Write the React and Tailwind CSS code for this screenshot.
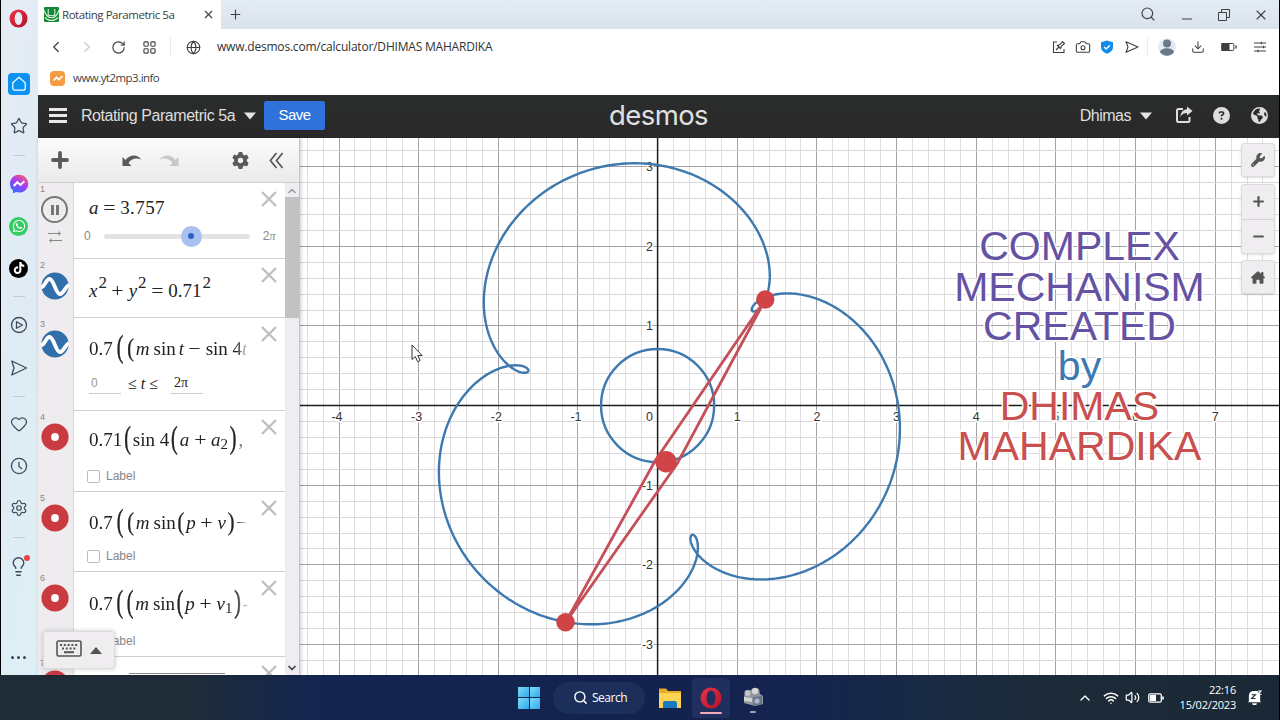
import { Search, Minus, X, Plus, ChevronLeft, ChevronRight, ChevronUp, RotateCw, Camera, Download, Star, Heart, Settings, Lightbulb, Globe, Wifi, Volume2 } from "lucide-react";
import { FaGear, FaWrench, FaCircleQuestion, FaEarthAmericas, FaWhatsapp, FaTiktok, FaHouseChimney } from "react-icons/fa6";

const OX = 657.6;
const OY = 405.6;
const UNIT = 79.65;
const px = (x) => OX + x * UNIT;
const py = (y) => OY - y * UNIT;

const range = (from, to) => Array.from({ length: to - from + 1 }, (_, i) => from + i);

// z(t) = 2.38 e^(it) - 0.7 e^(i(4t - 135deg))
function curvePath() {
  const phase = (-135 * Math.PI) / 180;
  const points = [];
  for (let i = 0; i <= 720; i++) {
    const t = (i * Math.PI) / 360;
    const x = 2.38 * Math.cos(t) - 0.7 * Math.cos(4 * t + phase);
    const y = 2.38 * Math.sin(t) - 0.7 * Math.sin(4 * t + phase);
    points.push(`${px(x).toFixed(2)} ${py(y).toFixed(2)}`);
  }
  return `M${points.join("L")}Z`;
}

const banner = [
  { text: "COMPLEX", y: 260, color: "#6552a3" },
  { text: "MECHANISM", y: 300.5, color: "#6552a3" },
  { text: "CREATED", y: 340, color: "#6552a3" },
  { text: "by", y: 380, color: "#3d7ab2" },
  { text: "DHIMAS", y: 419.5, color: "#c9504f" },
  { text: "MAHARDIKA", y: 460, color: "#c9504f" },
];

function OperaLogo({ className }) {
  return (
    <svg viewBox="0 0 20 20" className={className}>
      <defs>
        <linearGradient id="opera" x1="0" y1="0" x2="1" y2="1">
          <stop offset="0" stopColor="#ef3346" />
          <stop offset="1" stopColor="#b1122a" />
        </linearGradient>
      </defs>
      <path fillRule="evenodd" fill="url(#opera)" d="M10 0.5a9.5 9.5 0 1 0 0 19a9.5 9.5 0 0 0 0-19zM10 3.2c2.4 0 4 3 4 6.8s-1.6 6.8-4 6.8s-4-3-4-6.8s1.6-6.8 4-6.8z" />
    </svg>
  );
}

function Sidebar() {
  const icon = "h-[18px] w-[18px] text-[#3f4b57]";
  const dash = <div className="h-px w-3 bg-[#c3ccd4]" />;
  return (
    <div className="flex w-[38px] shrink-0 flex-col items-center border-l border-black bg-[linear-gradient(100deg,#e6ecf4,#dfebf4_50%,#def0f5)] pr-[2px]">
      <div className="flex h-[63px] w-full justify-center pt-[9px]"><OperaLogo className="h-[19px] w-[19px]" /></div>
      <div className="flex h-[42px] items-center">
        <div className="flex h-[22px] w-[22px] items-center justify-center rounded-sm bg-[#0b93f3]">
          <svg viewBox="0 0 16 16" className="h-4 w-4" fill="none" stroke="#fff" strokeWidth="1.2"><path d="M1.8 6.8L8 1.2l6.2 5.6v5.4a2 2 0 0 1-2 2H3.8a2 2 0 0 1-2-2z" /></svg>
        </div>
      </div>
      <div className="flex h-[42px] items-center"><Star className={icon} strokeWidth={1.7} /></div>
      <div className="flex h-4 items-center">{dash}</div>
      <div className="flex h-[42px] items-center">
        <svg viewBox="0 0 20 20" className="h-5 w-5">
          <defs>
            <linearGradient id="msgr" x1="0.2" y1="1" x2="0.8" y2="0">
              <stop offset="0" stopColor="#2b74ff" />
              <stop offset="0.55" stopColor="#a63cf5" />
              <stop offset="1" stopColor="#ff6070" />
            </linearGradient>
          </defs>
          <path fill="url(#msgr)" d="M10 0.8a9 9 0 0 1 9.3 8.8a9 9 0 0 1-11.9 8.5L4 19.3V16.5A9 9 0 0 1 10 .8z" />
          <path fill="none" stroke="#fff" strokeWidth="2" d="M4.7 12l3.6-3.8l3.2 2.7l3.8-3.6" />
        </svg>
      </div>
      <div className="flex h-[42px] items-center">
        <div className="flex h-[19px] w-[19px] items-center justify-center rounded-full bg-[#35cb65]"><FaWhatsapp className="h-3.5 w-3.5 text-white" /></div>
      </div>
      <div className="flex h-[42px] items-center">
        <div className="flex h-[19px] w-[19px] items-center justify-center rounded-full bg-black"><FaTiktok className="h-3 w-3 text-white" /></div>
      </div>
      <div className="flex h-[15px] items-center">{dash}</div>
      <div className="flex h-[42px] items-center">
        <svg viewBox="0 0 18 18" className={icon} fill="none" stroke="currentColor" strokeWidth="1.3"><circle cx="9" cy="9" r="7.5" /><path d="M6.5 5.7l6 3.3l-6 3.3z" strokeLinejoin="round" /></svg>
      </div>
      <div className="flex h-[43px] items-center">
        <svg viewBox="0 0 18 18" className={icon} fill="none" stroke="currentColor" strokeWidth="1.3" strokeLinejoin="round"><path d="M1.8 2L16.5 9L1.8 16L4 9z" /></svg>
      </div>
      <div className="flex h-[14px] items-center">{dash}</div>
      <div className="flex h-[42px] items-center"><Heart className={icon} strokeWidth={1.6} /></div>
      <div className="flex h-[42px] items-center">
        <svg viewBox="0 0 18 18" className={icon} fill="none" stroke="currentColor" strokeWidth="1.3"><circle cx="9" cy="9" r="7.6" /><path d="M9 5v4.5l3 2.5" /></svg>
      </div>
      <div className="flex h-[42px] items-center"><Settings className={icon} strokeWidth={1.6} /></div>
      <div className="flex h-4 items-center">{dash}</div>
      <div className="relative flex h-[42px] items-center">
        <Lightbulb className="h-[21px] w-[21px] text-[#3f4b57]" strokeWidth={1.6} />
        <span className="absolute top-[10px] -right-[1px] h-[6px] w-[6px] rounded-full bg-[#f04444]" />
      </div>
      <div className="mt-auto flex h-9 items-center gap-[3px]">
        {[0, 1, 2].map((i) => <span key={i} className="h-[3px] w-[3px] rounded-full bg-[#3c4650]" />)}
      </div>
    </div>
  );
}

function BrowserBars() {
  return (
    <div className="h-[95px] bg-white font-['Open_Sans',sans-serif] text-[#3d4043]">
      <div className="flex h-[29px] bg-[linear-gradient(180deg,#e3ebf3,#dae2ec)]">
        <div className="flex w-[183px] items-center bg-white pl-[6px]">
          <svg viewBox="0 0 16 16" className="h-[15px] w-[15px] shrink-0">
            <rect width="16" height="16" rx="1" fill="#128a31" />
            <path d="M0 3.5c2 5.5 4 8 8 8s6-2.5 8-8M4.5 2v6.5M11.5 2v6.5M4.5 8.5c1.5 1 5.5 1 7 0M1 11c2 2.5 4 3.5 7 3.5s5-1 7-3.5" fill="none" stroke="#dff5e2" strokeWidth="1.1" />
          </svg>
          <span className="ml-[3px] w-[140px] text-[11.5px] tracking-[-0.46px] whitespace-nowrap">Rotating Parametric 5a</span>
          <X className="h-[13px] w-[13px] shrink-0" strokeWidth={2} />
        </div>
        <div className="flex w-[29px] items-center justify-center"><Plus className="h-[15px] w-[15px]" strokeWidth={1.7} /></div>
        <div className="ml-auto flex w-[150px] items-center justify-between pr-[10px] pl-[11px]">
          <Search className="mb-[2px] h-4 w-4" strokeWidth={1.7} />
          <Minus className="mt-[9px] h-4 w-4" strokeWidth={1.7} />
          <svg viewBox="0 0 12 12" className="h-3 w-3" fill="none" stroke="currentColor"><path d="M.5 3.5h8v8h-8zM3.5 3.5v-3h8v8h-3" /></svg>
          <X className="h-4 w-4" strokeWidth={1.7} />
        </div>
      </div>
      <div className="flex h-9 items-center pr-[13px] pl-[9px]">
        <ChevronLeft className="h-[18px] w-[18px]" strokeWidth={1.7} />
        <ChevronRight className="ml-[13px] h-[18px] w-[18px] text-[#c8cacc]" strokeWidth={1.7} />
        <RotateCw className="ml-[15px] h-[15px] w-[15px]" strokeWidth={1.8} />
        <svg viewBox="0 0 14 14" className="ml-[17px] h-[13px] w-[13px]" fill="none" stroke="currentColor" strokeWidth="1.2">
          <rect x="1" y="1" width="4.6" height="4.6" rx="1" /><rect x="8.4" y="1" width="4.6" height="4.6" rx="1" />
          <rect x="1" y="8.4" width="4.6" height="4.6" rx="1" /><rect x="8.4" y="8.4" width="4.6" height="4.6" rx="1" />
        </svg>
        <div className="ml-[14px] h-5 w-px bg-[#ececec]" />
        <Globe className="ml-[15px] h-[15px] w-[15px]" strokeWidth={1.8} />
        <span className="ml-[16px] text-[12px] tracking-[-0.2px] whitespace-nowrap text-[#2f3235]">www.desmos.com/calculator/DHIMAS MAHARDIKA</span>
        <div className="ml-auto flex items-center">
          <svg viewBox="0 0 14 14" className="h-[14px] w-[14px]" fill="none" stroke="currentColor" strokeWidth="1.1"><path d="M5 2H1.5v10.5h10.5V9M4 10l3-3M5.5 5.5l3 3l1-2.5l3-2.5l-2-2l-2.5 3z" /></svg>
          <Camera className="ml-[9px] h-4 w-4" strokeWidth={1.6} />
          <svg viewBox="0 0 14 14" className="ml-[9px] h-[14px] w-[14px]"><path d="M7 .5l6 1.8v4.7c0 3.5-3 5.7-6 6.7c-3-1-6-3.2-6-6.7V2.3z" fill="#108ce8" /><path d="M4.2 7l2 2l3.7-3.7" stroke="#fff" strokeWidth="1.5" fill="none" /></svg>
          <svg viewBox="0 0 14 14" className="ml-[11px] h-[14px] w-[14px]" fill="none" stroke="currentColor" strokeWidth="1.1" strokeLinejoin="round"><path d="M1 1.8L13 7L1 12.2L3 7z" /></svg>
          <div className="ml-[8px] h-5 w-px bg-[#ececec]" />
          <svg viewBox="0 0 18 18" className="ml-[10px] h-[18px] w-[18px]"><circle cx="9" cy="9" r="8.8" fill="#e2ebf1" /><circle cx="9" cy="5.5" r="4" fill="#697987" /><path d="M2 14c1-5 13-5 14 0c-3 5-11 5-14 0z" fill="#697987" /></svg>
          <Download className="ml-[15px] h-[14px] w-[14px]" strokeWidth={1.8} />
          <svg viewBox="0 0 16 10" className="ml-[16px] h-[10px] w-4" fill="none" stroke="currentColor"><rect x=".8" y="1.5" width="12" height="7" rx="1" /><rect x="1" y="1.5" width="7" height="7" fill="currentColor" /><path d="M15 3.5v3" strokeWidth="1.4" /></svg>
          <svg viewBox="0 0 12 12" className="ml-[17px] h-3 w-3" fill="none" stroke="currentColor" strokeWidth="1.1"><path d="M0 2h12M0 6h12M0 10h12M7.5 .7v2.6M9.5 4.7v2.6M4 8.7v2.6" /></svg>
        </div>
      </div>
      <div className="flex h-[26px] items-center pl-[12px]">
        <div className="flex h-[15px] w-[15px] items-center justify-center rounded-sm bg-[#f59b42]">
          <svg viewBox="0 0 12 12" className="h-3 w-3" fill="none" stroke="#fff" strokeWidth="1.7"><path d="M1.5 8.5l3-3l2.5 2L10.5 4" /></svg>
        </div>
        <span className="ml-[8px] text-[11.5px] tracking-[-0.53px]">www.yt2mp3.info</span>
      </div>
    </div>
  );
}

function Caret() {
  return <svg viewBox="0 0 12 8" className="h-2 w-3 shrink-0"><path d="M0 .5h12L6 7.5z" fill="#e4e4e4" /></svg>;
}

function Header() {
  return (
    <div className="flex h-[43px] items-center justify-between bg-[#29292a] bg-[linear-gradient(180deg,#2a2d2d,#2a2829)] pb-[2px] font-['Liberation_Sans',Arial,sans-serif] text-[#dedede]">
      <div className="flex w-[490px] items-center pl-[11px]">
        <div className="flex w-[18px] flex-col gap-[3px]">
          {[0, 1, 2].map((i) => <span key={i} className="h-[3px] bg-[#e8e8e8]" />)}
        </div>
        <span className="ml-[14px] w-[163px] text-[16px] tracking-[-0.43px] whitespace-nowrap">Rotating Parametric 5a</span>
        <Caret />
        <div className="ml-[8px] flex h-[29px] w-[61px] items-center justify-center rounded-[2px] bg-[#2f72dc] text-[15px] tracking-[-0.5px] text-white">Save</div>
      </div>
      <div className="w-[260px] text-center font-['Inter',sans-serif] text-[27.5px] leading-none text-[#e0e0e0]"><span className="inline-block tracking-[-0.55px]">desmos</span></div>
      <div className="flex w-[490px] items-center justify-end pr-[11px]">
        <span className="mr-[9px] text-[16px] tracking-[-0.5px]">Dhimas</span>
        <Caret />
        <svg viewBox="0 0 18 18" className="mb-[2px] ml-[23px] h-[18px] w-[18px]" fill="none" stroke="#dedede" strokeWidth="2"><path d="M8 3H3.5A1.5 1.5 0 0 0 2 4.5v10A1.5 1.5 0 0 0 3.5 16h9.5a1.5 1.5 0 0 0 1.5-1.5V11" /><path d="M12 0.5l5.5 4.5L12 9.5V7c-3 0-5 .8-6.5 4C5.5 6.5 8 3.5 12 3.2z" fill="#dedede" stroke="none" /></svg>
        <FaCircleQuestion className="ml-[20px] h-[17px] w-[17px]" />
        <FaEarthAmericas className="ml-[21px] h-[17px] w-[17px]" />
      </div>
    </div>
  );
}

function CurveIcon() {
  return (
    <svg viewBox="0 0 28 28" className="h-7 w-7">
      <circle cx="14" cy="14" r="13.6" fill="#316fab" />
      <path d="M0 15.5C4 14.500 5 7 8.500 7C13 7 14.500 22 19 22C22.500 22 24 15 28 13" fill="none" stroke="#fff" strokeWidth="3.8" />
    </svg>
  );
}

function PointIcon() {
  return (
    <svg viewBox="0 0 28 28" className="h-7 w-7">
      <circle cx="14" cy="14" r="13.6" fill="#c93b40" />
      <circle cx="14" cy="14" r="3.9" fill="#fff" />
    </svg>
  );
}

// Bracket stretched vertically from the ordinary glyph
function Paren({ children, tall }) {
  return <span className={`inline-block w-[10.5px] origin-[50%_62%] text-center text-[20px] [-webkit-text-stroke:0.3px_#222] ${tall ? "scale-y-[1.55]" : "scale-y-[1.25]"}`}>{children}</span>;
}

function Op({ children }) {
  return <span className="mx-[5.5px] inline-block text-center"><span className="inline-block scale-x-[1.15]">{children}</span></span>;
}

function Sup({ children }) {
  return <sup className="relative top-[-9px] ml-px text-[17px] leading-none">{children}</sup>;
}

function Label({ className = "" }) {
  return (
    <div className={`flex items-center font-['Liberation_Sans',Arial,sans-serif] text-[12px] text-[#868686] ${className}`}>
      <span className="mr-[6px] h-[13px] w-[13px] rounded-[2px] border border-[#bbb] bg-white" />Label
    </div>
  );
}

function Row({ n, height, icon, children }) {
  return (
    <div className={`flex shrink-0 overflow-hidden ${height}`}>
      <div className="relative flex w-[36px] shrink-0 flex-col items-center border-r border-[#d6d6d8] bg-[#eeecef] pr-[2px]">
        <span className="absolute top-0 left-[2px] font-['Liberation_Sans',Arial,sans-serif] text-[9px] leading-[12px] text-[#888]">{n}</span>
        {icon}
      </div>
      <div className="relative min-w-0 flex-1 border-b border-[#cfcfd1] bg-white pl-[15px] font-['Liberation_Serif',serif] text-[19px] leading-[24px] text-[#222]">
        {children}
        <svg viewBox="0 0 16 16" className="absolute top-[8px] right-[8px] h-4 w-4" stroke="#bfbfbf" strokeWidth="2.4"><path d="M1 1l14 14M15 1L1 15" /></svg>
      </div>
    </div>
  );
}

function ExpressionPanel() {
  const expr = "flex w-[160px] items-baseline overflow-hidden whitespace-pre h-[36px] pt-[6px] [mask-image:linear-gradient(90deg,#000_92%,transparent)]";
  return (
    <div className="relative z-10 flex w-[262px] shrink-0 flex-col overflow-hidden border-r border-[#c4c4c6] bg-white shadow-[1px_0_4px_#0003]">
      <div className="flex h-[45px] shrink-0 items-center border-b border-[#cfcfd1] bg-[linear-gradient(180deg,#fcfcfc,#ebe9ea)] text-[#5a5a5a]">
        <Plus className="ml-[10px] h-[24px] w-[24px]" strokeWidth={3.8} />
        <svg viewBox="0 0 20 14" className="ml-[50px] h-[14px] w-5"><path d="M.5 4v9h9l-3-3c2.5-4 7-5.5 13-3.5C15 1 8 1 3.5 7z" fill="#5a5a5a" /></svg>
        <svg viewBox="0 0 20 14" className="ml-[17px] h-[14px] w-5"><path d="M19.5 4v9h-9l3-3c-2.5-4-7-5.5-13-3.5C5 1 12 1 16.5 7z" fill="#c8c8c8" /></svg>
        <FaGear className="ml-[53px] h-[17px] w-[17px]" />
        <svg viewBox="0 0 16 18" className="ml-[20px] h-[17px] w-[15px]" fill="none" stroke="#5a5a5a" strokeWidth="1.9"><path d="M8 1L1.5 9L8 17M14.5 1L8 9l6.5 8" /></svg>
      </div>
      <div className="flex min-h-0 flex-1">
        <div className="flex w-[247px] flex-col overflow-hidden">
          <Row
            n="1"
            height="h-[76px]"
            icon={
              <>
                <div className="mt-[13px] flex h-[27px] w-[27px] shrink-0 items-center justify-center gap-[2px] rounded-full border-2 border-[#777]">
                  <span className="h-[10px] w-[3px] bg-[#777]" /><span className="h-[10px] w-[3px] bg-[#777]" />
                </div>
                <svg viewBox="0 0 14 12" className="mt-[8px] h-3 w-[14px]" fill="none" stroke="#888" strokeWidth="1.2"><path d="M0 2.5h13M11 .5v4M1 9.5h13M3 7.5v4" /></svg>
              </>
            }
          >
            <div className="flex h-[36px] items-baseline pt-[13px]"><i>a</i><span className="mx-[5px] inline-block scale-x-[1.15]">=</span><span className="ml-[1px] tracking-[0.4px]">3.757</span></div>
            <div className="mt-[6px] -ml-[5px] flex items-center font-['Liberation_Sans',Arial,sans-serif] text-[12px] leading-[22px] text-[#888]">
              <span>0</span>
              <div className="relative ml-[13px] h-[5px] w-[146px] rounded-full bg-[#e3e3e3]">
                <span className="absolute -top-[8px] left-[77px] flex h-[21px] w-[21px] items-center justify-center rounded-full bg-[#a8c1f1]"><span className="h-[6px] w-[6px] rounded-full bg-[#315fc5]" /></span>
              </div>
              <span className="ml-[13px]">2<i className="font-['Liberation_Serif',serif]">π</i></span>
            </div>
          </Row>
          <Row n="2" height="h-[59px]" icon={<div className="mt-[13px]"><CurveIcon /></div>}>
            <div className="flex items-baseline pt-[20px] whitespace-pre"><i>x</i><Sup>2</Sup><Op>+</Op><i>y</i><Sup>2</Sup><Op>=</Op><span>0.71</span><Sup>2</Sup></div>
          </Row>
          <Row n="3" height="h-[93px]" icon={<div className="mt-[12px]"><CurveIcon /></div>}>
            <div className="h-[12px]" />
            <div className={expr}>0.7<span className="ml-[2px]" /><Paren tall>(</Paren><Paren>(</Paren><i>m</i><span className="mr-[3px] ml-[4px]">sin</span><i>t</i><Op>−</Op>sin 4<i>t</i></div>
            <div className="mt-[7px] flex items-center text-[16px] leading-[20px]">
              <span className="w-8 border-b border-[#ccc] pl-[2px] font-['Liberation_Sans',Arial,sans-serif] text-[12px] text-[#999]">0</span>
              <span className="ml-[7px] w-[36px] whitespace-pre">≤ <i>t</i> ≤</span>
              <span className="ml-[6px] w-[33px] border-b border-[#ccc] pl-[4px] text-[14px]">2π</span>
            </div>
          </Row>
          <Row n="4" height="h-[81px]" icon={<div className="mt-[12px]"><PointIcon /></div>}>
            <div className="h-[10px]" />
            <div className={expr}>0.71<Paren tall>(</Paren>sin 4<Paren tall>(</Paren><i>a</i><Op>+</Op><i>a</i><sub className="relative top-[3px] text-[15px] leading-none">2</sub><Paren tall>)</Paren><span>,</span></div>
            <Label className="mt-[7px] -ml-[2px]" />
          </Row>
          <Row n="5" height="h-[80px]" icon={<div className="mt-[12px]"><PointIcon /></div>}>
            <div className="h-[12px]" />
            <div className={expr}>0.7<span className="ml-[2px]" /><Paren tall>(</Paren><Paren>(</Paren><i>m</i><span className="ml-[4px]">sin</span><Paren>(</Paren><i>p</i><Op>+</Op><i>v</i><Paren>)</Paren><span>−</span></div>
            <Label className="mt-[4px] -ml-[2px]" />
          </Row>
          <Row n="6" height="h-[85px]" icon={<div className="mt-[12px]"><PointIcon /></div>}>
            <div className="h-[13px]" />
            <div className={expr}>0.7<span className="ml-[2px]" /><Paren tall>(</Paren><Paren tall>(</Paren><i>m</i><span className="ml-[4px]">sin</span><Paren tall>(</Paren><i>p</i><Op>+</Op><i>v</i><sub className="relative top-[3px] text-[15px] leading-none">1</sub><Paren tall>)</Paren><span>-</span></div>
            <Label className="mt-[8px] -ml-[2px]" />
          </Row>
          <Row n="7" height="h-[30px]" icon={<div className="mt-[13px]"><PointIcon /></div>}>
            <div className="mt-[16px] ml-[40px] h-px w-[96px] bg-[#888]" />
          </Row>
        </div>
        <div className="flex flex-1 flex-col items-center bg-[#efedf1]">
          <ChevronUp className="mt-[2px] h-3 w-3 shrink-0 text-[#999]" strokeWidth={3} />
          <div className="h-[121px] w-full bg-[#c3c1c4]" />
          <ChevronUp className="mt-auto mb-[1px] h-3 w-3 rotate-180 text-[#444]" strokeWidth={3.5} />
        </div>
      </div>
      <div className="absolute bottom-[6px] left-[5px] flex h-[38px] w-[72px] items-center rounded-[3px] border border-[#dcdcde] bg-[#efedef] pb-[3px] pl-[12px] shadow-[0_0_5px_#0003]">
        <svg viewBox="0 0 26 17" className="h-[17px] w-[26px]" fill="none" stroke="#555"><rect x="1" y="1" width="24" height="15" rx="1.5" strokeWidth="1.6" /><path d="M4 5h18M6 8.5h14" strokeWidth="2" strokeDasharray="2 1.8" /><path d="M8 12.2h10" strokeWidth="2" /></svg>
        <svg viewBox="0 0 12 7" className="mt-[3px] ml-[8px] h-[7px] w-3"><path d="M0 7h12L6 0z" fill="#555" /></svg>
      </div>
    </div>
  );
}

function Graph() {
  const halo = { paintOrder: "stroke", stroke: "#fff", strokeWidth: 3, strokeLinejoin: "round" };
  return (
    <div className="relative flex-1 overflow-hidden bg-white">
      <svg viewBox="300 138 979 537" className="block h-[537px] w-[979px]">
        {range(-22, 38).map((i) => (
          <path key={`x${i}`} d={`M${Math.floor(px(i / 5)) + 0.5} 138v537`} stroke={i % 5 ? "#e0dde0" : "#a3a1a3"} />
        ))}
        {range(-16, 16).map((i) => (
          <path key={`y${i}`} d={`M300 ${Math.floor(py(i / 5)) + 0.5}h979`} stroke={i % 5 ? "#dad8da" : "#a3a1a3"} />
        ))}
        <path d={`M${OX} 138v537M300 ${OY}h979`} stroke="#1c1c1c" strokeWidth="1.5" />
        <g className="font-['Liberation_Sans',Arial,sans-serif] text-[12.5px]" fill="#333" {...halo}>
          {[-4, -3, -2, -1, 1, 2, 3, 4, 5, 6, 7].map((n) => (
            <text key={n} x={px(n) - (n < 0 ? 2 : 0)} y="420.5" textAnchor="middle">{n}</text>
          ))}
          <text x="649.5" y="420.5" textAnchor="middle">0</text>
          {[-3, -2, -1, 1, 2, 3].map((n) => (
            <text key={`l${n}`} x="653" y={py(n) + 4.5} textAnchor="end">{n}</text>
          ))}
        </g>
        <g fill="none" stroke="#3d79ae" strokeWidth="2.4">
          <circle cx={OX} cy={OY} r={0.71 * UNIT} />
          <path d={curvePath()} />
        </g>
        <path d="M565.5 622.5L655 461L765.3 299.5L677 464Z" fill="none" stroke="#c4505a" strokeWidth="2.8" />
        <g fill="#d04347">
          <circle cx="765.3" cy="299.5" r="9.2" />
          <circle cx="565.5" cy="622.3" r="9.2" />
          <circle cx="666" cy="461.8" r="10.7" />
        </g>
        <g className="font-['Liberation_Sans',Arial,sans-serif] text-[41px]" textAnchor="middle" {...halo}>
          {banner.map((line) => (
            <text key={line.text} x="1079.5" y={line.y} fill={line.color}>{line.text}</text>
          ))}
        </g>
        <path d="M412 345v14.5l3.3-3l2.3 5.2l2.5-1.2l-2.3-5h4.4z" fill="#fff" stroke="#333" />
      </svg>
      <div className="absolute top-[5px] right-[4px] flex w-[34px] flex-col text-[#555]">
        <div className="flex h-[34px] items-center justify-center rounded-[3px] border border-[#dcdadd] bg-[#efedf0] shadow-sm"><FaWrench className="h-[14px] w-[14px]" /></div>
        <div className="mt-[7px] flex h-[70px] flex-col rounded-[3px] border border-[#dcdadd] bg-[#efedf0] shadow-sm">
          <div className="flex flex-1 items-center justify-center border-b border-[#d6d4d7]"><Plus className="h-[15px] w-[15px]" strokeWidth={3.5} /></div>
          <div className="flex flex-1 items-center justify-center"><Minus className="h-[15px] w-[15px]" strokeWidth={3.5} /></div>
        </div>
        <div className="mt-[6px] flex h-[34px] items-center justify-center rounded-[3px] border border-[#dcdadd] bg-[#efedf0] shadow-sm"><FaHouseChimney className="h-[13px] w-[14px]" /></div>
      </div>
    </div>
  );
}

function Taskbar() {
  return (
    <div className="flex h-[45px] items-center bg-[linear-gradient(90deg,#1f2c37_0,#1f2c38_14%,#132650_25%,#13234d_48%,#14234f_62%,#182a45_72%,#1d2b38_82%,#1b2936_100%)] font-['Open_Sans',sans-serif] text-white">
      <div className="ml-[518px] grid grid-cols-2 gap-[1px]">
        {[0, 1, 2, 3].map((i) => <span key={i} className="h-[10.5px] w-[10.5px] bg-[linear-gradient(135deg,#7fdcf9,#2da9ec)]" />)}
      </div>
      <div className="ml-[13px] flex h-8 w-[92px] items-center rounded-full bg-[#1c2f5a] pl-[20px] text-[12px] tracking-[-0.5px]">
        <Search className="mr-[4px] h-[15px] w-[15px]" strokeWidth={2.3} />Search
      </div>
      <svg viewBox="0 0 24 22" className="ml-[13px] h-[22px] w-6">
        <path d="M1 1.5h7l2 2.5h13v17H1z" fill="#e9ab28" />
        <path d="M1 6h22v15H1z" fill="#fcd355" />
        <path d="M5 21v-5a2 2 0 0 1 2-2h10a2 2 0 0 1 2 2v5z" fill="#1b79be" />
      </svg>
      <div className="ml-[10px] flex h-10 w-[38px] flex-col items-center rounded bg-[#202f5e] pt-[9px]">
        <OperaLogo className="h-[22px] w-[22px]" />
        <span className="mt-[3px] h-[2.5px] w-[22px] rounded-full bg-[#f0a9bd]" />
      </div>
      <div className="ml-[11px] flex h-10 w-6 flex-col items-center pt-[9px]">
        <svg viewBox="0 0 22 20" className="h-5 w-[22px]">
          <path d="M2 9l2-4l9-4l4 1l1 5l3 2v8l-8 2l-11-3z" fill="#8e979d" />
          <path d="M11 10l9-1v8l-9 2z" fill="#65758f" />
          <circle cx="5.5" cy="6" r="3" fill="#c1c5c2" /><circle cx="13" cy="4" r="3.2" fill="#d4d7d4" />
          <path d="M2 10l8 1v4l-8-1z" fill="#cfd3d1" /><circle cx="15" cy="14" r="2.6" fill="#aeb8c9" />
        </svg>
        <span className="mt-[4px] h-[2px] w-[6px] rounded-full bg-[#98a3bd]" />
      </div>
      <div className="ml-auto flex items-center">
        <ChevronUp className="h-4 w-4" strokeWidth={2} />
        <Wifi className="ml-[10px] h-4 w-4" strokeWidth={2.2} />
        <Volume2 className="ml-[6px] h-[15px] w-[15px]" strokeWidth={2} />
        <svg viewBox="0 0 16 10" className="ml-[8px] h-[10px] w-4" fill="none" stroke="#fff"><rect x=".8" y=".8" width="12.5" height="8.4" rx="1.5" strokeWidth="1.3" /><rect x="2.5" y="2.5" width="5" height="5" fill="#fff" /><path d="M15 3.5v3" strokeWidth="1.6" /></svg>
        <div className="mb-[2px] ml-[14px] w-[58px] text-right text-[11px] leading-[15px] tracking-[-0.2px] whitespace-nowrap"><div>22:16</div><div>15/02/2023</div></div>
        <svg viewBox="0 0 16 16" className="mr-[17px] ml-[11px] h-[15px] w-[15px]"><path d="M2 12V6c0-3 2-5 5-5h4l3 4v7l1 1H1zM5.5 14h5a2.5 2.5 0 0 1-5 0z" fill="#fff" /><path d="M5 5h4L5 9h4" fill="none" stroke="#1c2b38" strokeWidth="1.2" /><path d="M11.5 1H15l-3 3.5h3.5" fill="none" stroke="#fff" strokeWidth="1.2" /></svg>
      </div>
    </div>
  );
}

export default function App() {
  return (
    <div className="flex h-[720px] w-[1280px] flex-col overflow-hidden border-r border-black">
      <div className="flex h-[675px]">
        <Sidebar />
        <div className="flex min-w-0 flex-1 flex-col">
          <BrowserBars />
          <Header />
          <div className="flex h-[537px]">
            <ExpressionPanel />
            <Graph />
          </div>
        </div>
      </div>
      <Taskbar />
    </div>
  );
}
